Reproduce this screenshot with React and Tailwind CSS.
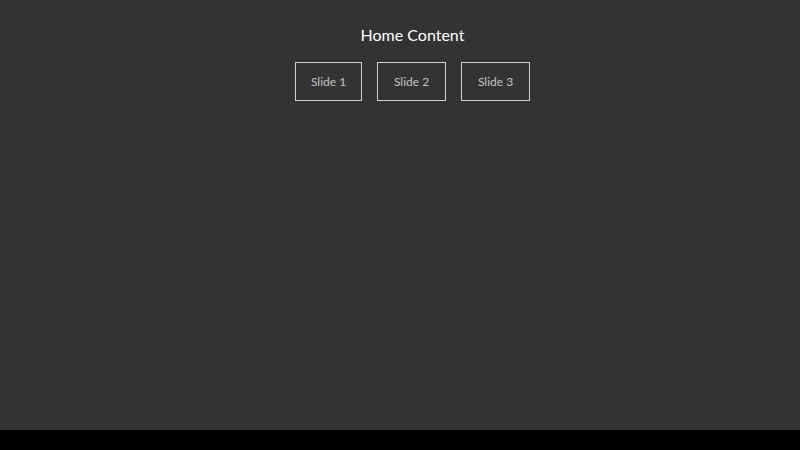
import React from "react";

const slides = ["Slide 1", "Slide 2", "Slide 3"];

export default function App() {
  return (
    <div className="w-[800px] h-[450px] flex flex-col bg-black font-['Lato','Noto_Sans',sans-serif]">
      <div className="h-[430px] bg-[#333333] pl-[25px] flex flex-col items-center">
        <h1 className="mt-[25px] text-[16px] leading-[20px] text-white">Home Content</h1>
        <div className="mt-[17px] flex gap-[15px]">
          {slides.map((s, i) => (
            <div
              key={s}
              className={`h-[39px] ${i === 0 ? "w-[67px]" : "w-[69px]"} border border-[#d0d0d0] flex items-center justify-center text-[12px] text-[#c4c4c4]`}
            >
              {s}
            </div>
          ))}
        </div>
      </div>
    </div>
  );
}
